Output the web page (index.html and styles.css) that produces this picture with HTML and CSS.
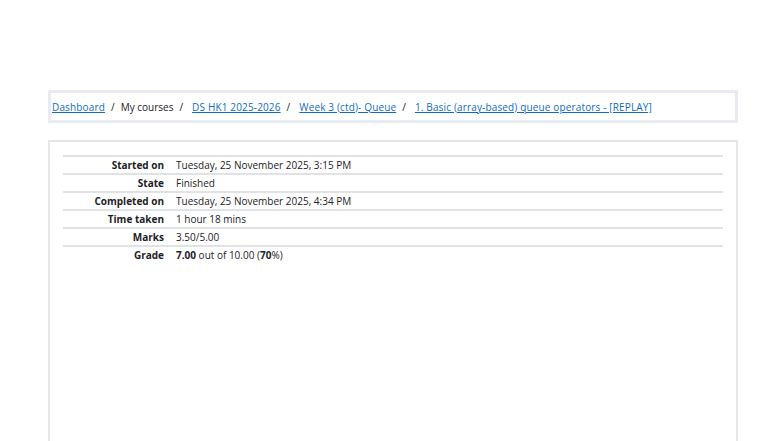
FILE: index.html
```html
<!DOCTYPE html>
<html lang="en">
<head>
    <meta charset="UTF-8">
    <meta name="viewport" content="width=device-width, initial-scale=1.0">
    <link rel="stylesheet" href="styles.css">
    <title>Quiz review</title>
</head>
<body>

<div class="page">
    <nav class="breadcrumb">
        <a href="#">Dashboard</a>
        <span class="sep">/</span>
        <span>My courses</span>
        <span class="sep">/</span>
        <a href="#" class="crumb">DS HK1 2025-2026</a>
        <span class="sep">/</span>
        <a href="#" class="crumb">Week 3 (ctd)- Queue</a>
        <span class="sep">/</span>
        <a href="#" class="crumb">1. Basic (array-based) queue operators - [REPLAY]</a>
    </nav>

    <div class="content">
        <table class="summary">
            <tr>
                <th>Started on</th>
                <td>Tuesday, 25 November 2025, 3:15 PM</td>
            </tr>
            <tr>
                <th>State</th>
                <td>Finished</td>
            </tr>
            <tr>
                <th>Completed on</th>
                <td>Tuesday, 25 November 2025, 4:34 PM</td>
            </tr>
            <tr>
                <th>Time taken</th>
                <td>1 hour 18 mins</td>
            </tr>
            <tr>
                <th>Marks</th>
                <td>3.50/5.00</td>
            </tr>
            <tr>
                <th>Grade</th>
                <td><b>7.00</b> out of 10.00 (<b>70</b>%)</td>
            </tr>
        </table>
    </div>
</div>

</body>
</html>
```

FILE: styles.css
```css
body {
    font-family: "Open Sans", "Noto Sans", sans-serif;
    font-size: 10px;
    color: #1d2125;
    background-color: #fff;
    margin: 0;
    padding: 0;
    overflow: hidden;
}

.page {
    padding: 90px 46px 0 48px;
}

.breadcrumb {
    border: 3px solid #e8ecf1;
    height: 27px;
    padding: 0 1px;
    display: flex;
    align-items: center;
    white-space: nowrap;
}

.breadcrumb a {
    color: #0f6cbf;
    text-decoration: underline;
    letter-spacing: 0.15px;
}

.breadcrumb .crumb {
    margin-left: 3px;
}

.breadcrumb .sep {
    margin: 0 6px;
    color: #1d2125;
}

.content {
    margin-top: 17px;
    border: 2px solid #e6e6e6;
    border-bottom: none;
    height: 301px;
    box-sizing: border-box;
    padding: 13px 13px 0 13px;
}

.summary {
    width: 100%;
    border-collapse: collapse;
}

.summary tr {
    border-top: 2px solid #dfe3e8;
}

.summary th {
    width: 101px;
    text-align: right;
    font-weight: bold;
    padding: 0 11px 0 0;
    height: 16px;
}

.summary td {
    text-align: left;
    padding: 0 0 0 1px;
    height: 16px;
}
```
